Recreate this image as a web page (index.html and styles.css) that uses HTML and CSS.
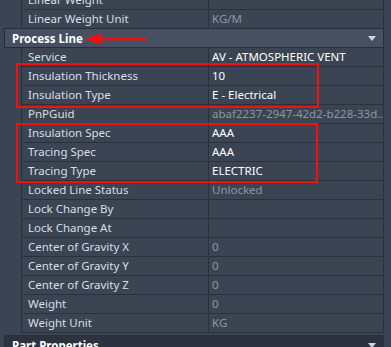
FILE: index.html
```html
<!DOCTYPE html>
<html>
<head>
<meta charset="utf-8">
<link rel="stylesheet" href="styles.css">
</head>
<body>
<div class="panel">
  <div class="group top">
    <div class="row"><div class="name">Linear Weight</div><div class="val"></div></div>
    <div class="row"><div class="name">Linear Weight Unit</div><div class="val ro">KG/M</div></div>
  </div>
  <div class="head"><span>Process Line</span><i class="tri"></i></div>
  <div class="group">
    <div class="row"><div class="name">Service</div><div class="val">AV - ATMOSPHERIC VENT</div></div>
    <div class="row"><div class="name">Insulation Thickness</div><div class="val">10</div></div>
    <div class="row"><div class="name">Insulation Type</div><div class="val">E - Electrical</div></div>
    <div class="row"><div class="name">PnPGuid</div><div class="val ro">abaf2237-2947-42d2-b228-33d...</div></div>
    <div class="row"><div class="name">Insulation Spec</div><div class="val">AAA</div></div>
    <div class="row"><div class="name">Tracing Spec</div><div class="val">AAA</div></div>
    <div class="row"><div class="name">Tracing Type</div><div class="val">ELECTRIC</div></div>
    <div class="row"><div class="name">Locked Line Status</div><div class="val ro">Unlocked</div></div>
    <div class="row"><div class="name">Lock Change By</div><div class="val"></div></div>
    <div class="row"><div class="name">Lock Change At</div><div class="val"></div></div>
    <div class="row"><div class="name">Center of Gravity X</div><div class="val ro">0</div></div>
    <div class="row"><div class="name">Center of Gravity Y</div><div class="val ro">0</div></div>
    <div class="row"><div class="name">Center of Gravity Z</div><div class="val ro">0</div></div>
    <div class="row"><div class="name">Weight</div><div class="val ro">0</div></div>
    <div class="row"><div class="name">Weight Unit</div><div class="val ro">KG</div></div>
  </div>
  <div class="head dark"><span>Part Properties</span><i class="tri"></i></div>
</div>
<div class="mark box1"></div>
<div class="mark box2"></div>
<svg class="arrow" width="70" height="14" viewBox="0 0 70 14">
  <polygon points="0,7 16,1 16,13" fill="#f01010"/>
  <rect x="14" y="6" width="48" height="2.4" fill="#f01010"/>
</svg>
</body>
</html>
```

FILE: styles.css
```css
html, body {
  margin: 0;
  padding: 0;
}
body {
  position: relative;
  width: 391px;
  height: 347px;
  overflow: hidden;
  background: #3b4453;
  font-family: "Noto Sans", "Open Sans", sans-serif;
  font-size: 11.5px;
  color: #d9dee6;
}
.panel {
  width: 380px;
  padding-left: 4px;
  margin-top: -10px;
}
.group {
  margin-left: 17px;
  border-left: 1px solid #2b313b;
  border-right: 1px solid #2b313b;
  border-bottom: 1px solid #2b313b;
}
.group.top {
  border-bottom: 0;
}
.row {
  display: grid;
  grid-template-columns: 187px 1fr;
  height: 19px;
  box-sizing: border-box;
  border-top: 1px solid #2b313b;
}
.group:not(.top) .row:first-child {
  border-top: 0;
  height: 18px;
}
.name {
  border-right: 1px solid #2b313b;
  padding-left: 6px;
  line-height: 18px;
  white-space: nowrap;
  overflow: hidden;
}
.val {
  padding-left: 3px;
  line-height: 18px;
  color: #ffffff;
  white-space: nowrap;
  overflow: hidden;
}
.val.ro {
  color: #8d96a3;
}
.head {
  display: flex;
  align-items: center;
  justify-content: space-between;
  height: 20px;
  box-sizing: border-box;
  background: #465062;
  border: 1px solid #272c35;
  padding-left: 7px;
  padding-right: 7px;
  font-weight: bold;
  color: #ffffff;
}
.head.dark {
  margin-top: 2px;
  background: #2d333e;
  border-color: #2a2f39;
}
.tri {
  width: 0;
  height: 0;
  border-left: 4px solid transparent;
  border-right: 4px solid transparent;
  border-top: 5px solid #cfd4dc;
}
.mark {
  position: absolute;
  border: 2px solid #f01010;
  box-sizing: border-box;
}
.box1 {
  left: 16px;
  top: 63px;
  width: 303px;
  height: 45px;
}
.box2 {
  left: 16px;
  top: 123px;
  width: 302px;
  height: 60px;
}
.arrow {
  position: absolute;
  left: 85px;
  top: 32px;
}
```
